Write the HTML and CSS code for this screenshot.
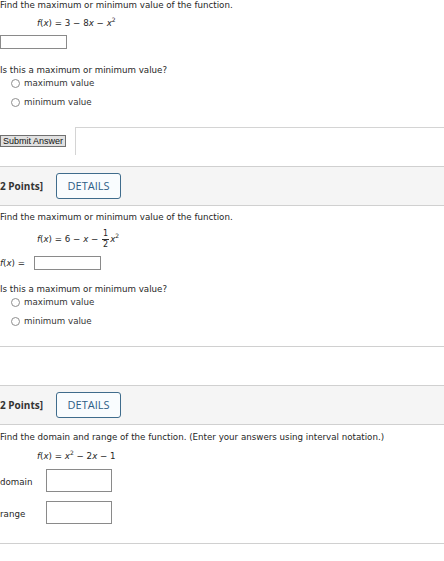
FILE: index.html
```html
<!DOCTYPE html>
<html>
<head>
<meta charset="utf-8">
<link rel="stylesheet" href="styles.css">
</head>
<body>
<div class="q">
  <div class="line prompt first">Find the maximum or minimum value of the function.</div>
  <div class="line formula f1"><i>f</i>(<i>x</i>) = 3 − 8<i>x</i> − <i>x</i><sup>2</sup></div>
  <div class="ans a1"></div>
  <div class="line ask a-first">Is this a maximum or minimum value?</div>
  <div class="line opt o1"><span class="radio"></span>maximum value</div>
  <div class="line opt o2"><span class="radio"></span>minimum value</div>
  <div class="submit-row">
    <span class="submit">Submit Answer</span>
    <div class="submit-box"></div>
  </div>
</div>

<div class="header h1">
  <span class="points">2 Points]</span>
  <span class="details">DETAILS</span>
</div>

<div class="q q2">
  <div class="line prompt p2">Find the maximum or minimum value of the function.</div>
  <div class="formula frac-line"><i>f</i>(<i>x</i>) = 6 − <i>x</i> − <span class="frac"><span class="num">1</span><span class="den">2</span></span><i>x</i><sup>2</sup></div>
  <div class="fx-row"><span class="fx-label"><i>f</i>(<i>x</i>) =</span><span class="ans a2"></span></div>
  <div class="line ask ask2">Is this a maximum or minimum value?</div>
  <div class="line opt o1"><span class="radio"></span>maximum value</div>
  <div class="line opt o2"><span class="radio"></span>minimum value</div>
</div>

<div class="header h2">
  <span class="points">2 Points]</span>
  <span class="details">DETAILS</span>
</div>

<div class="q q3">
  <div class="line prompt p3">Find the domain and range of the function. (Enter your answers using interval notation.)</div>
  <div class="line formula f3"><i>f</i>(<i>x</i>) = <i>x</i><sup>2</sup> − 2<i>x</i> − 1</div>
  <div class="dr-row r1"><span class="dr-label">domain</span><span class="ans big"></span></div>
  <div class="dr-row r2"><span class="dr-label">range</span><span class="ans big"></span></div>
</div>
</body>
</html>
```
FILE: styles.css
```css
html, body {
  margin: 0;
  padding: 0;
  background: #fff;
}
body {
  font-family: "DejaVu Sans", Verdana, sans-serif;
  font-size: 8.7px;
  color: #262626;
  overflow: hidden;
  width: 444px;
  height: 561px;
}
.line {
  height: 12px;
  line-height: 12px;
  white-space: nowrap;
}
.prompt.first { margin-top: -1px; }
.formula { padding-left: 37px; }
.f1 { margin-top: 6px; }
sup {
  font-size: 6px;
  vertical-align: 4px;
  line-height: 0;
}
i { font-style: italic; }
.ans {
  display: block;
  box-sizing: border-box;
  border: 1px solid #8a8a8a;
  background: #fff;
}
.a1 {
  margin-top: 6px;
  width: 67px;
  height: 14px;
}
.a-first { margin-top: 15px; }
.opt {
  display: flex;
  align-items: center;
  color: #333;
}
.o1 { margin-top: 1px; }
.o2 { margin-top: 7px; }
.radio {
  display: inline-block;
  box-sizing: border-box;
  width: 9px;
  height: 9px;
  border: 1px solid #8e8e8e;
  border-radius: 50%;
  margin-left: 11px;
  margin-right: 4px;
}
.submit-row {
  margin-top: 19px;
  height: 28px;
  display: flex;
  align-items: center;
}
.submit {
  box-sizing: border-box;
  width: 66px;
  height: 12px;
  line-height: 10px;
  border: 1px solid #707070;
  background: #e1e1e1;
  font-family: "Liberation Sans", Arial, sans-serif;
  font-size: 9px;
  color: #111;
  text-align: center;
  white-space: nowrap;
}
.submit-box {
  align-self: stretch;
  flex: 1;
  margin-left: 9px;
  border-top: 1px solid #d4d4d4;
  border-left: 1px solid #d4d4d4;
}
.header {
  box-sizing: border-box;
  height: 40px;
  border-top: 1px solid #d0d0d0;
  border-bottom: 1px solid #d0d0d0;
  background: #f5f5f5;
  display: flex;
  align-items: center;
}
.h1 { margin-top: 11px; }
.points {
  font-family: "Open Sans", sans-serif;
  font-weight: 700;
  font-size: 10px;
  color: #333;
  white-space: nowrap;
}
.details {
  box-sizing: border-box;
  margin-left: 13px;
  width: 65px;
  height: 26px;
  line-height: 24px;
  border: 1px solid #3f6c8c;
  border-radius: 3px;
  background: #f9fcfe;
  font-family: "Open Sans", sans-serif;
  font-size: 11px;
  color: #2e5e86;
  text-align: center;
}
.p2 { margin-top: 5px; }
.frac-line {
  margin-top: 7px;
  height: 18px;
  line-height: 18px;
  white-space: nowrap;
}
.frac {
  display: inline-flex;
  flex-direction: column;
  align-items: center;
  vertical-align: middle;
  margin: 0 1px 0 1px;
  font-size: 8px;
  line-height: 8px;
}
.num {
  border-bottom: 1px solid #333;
  padding: 0 1px 1px;
}
.den { padding-top: 1px; }
.fx-row {
  margin-top: 8px;
  height: 14px;
  display: flex;
  align-items: center;
}
.fx-label {
  width: 34px;
  white-space: nowrap;
}
.a2 {
  width: 67px;
  height: 14px;
}
.ask2 { margin-top: 13px; }
.q2 {
  border-bottom: 1px solid #d0d0d0;
  padding-bottom: 19px;
}
.h2 { margin-top: 38px; }
.p3 { margin-top: 6px; }
.f3 { margin-top: 7px; }
.dr-row {
  display: flex;
  align-items: center;
  height: 23px;
}
.r1 { margin-top: 7px; }
.r2 { margin-top: 9px; }
.dr-label {
  width: 46px;
  padding-top: 2px;
}
.big {
  width: 66px;
  height: 23px;
}
.q3 {
  border-bottom: 1px solid #d0d0d0;
  padding-bottom: 19px;
}
```
